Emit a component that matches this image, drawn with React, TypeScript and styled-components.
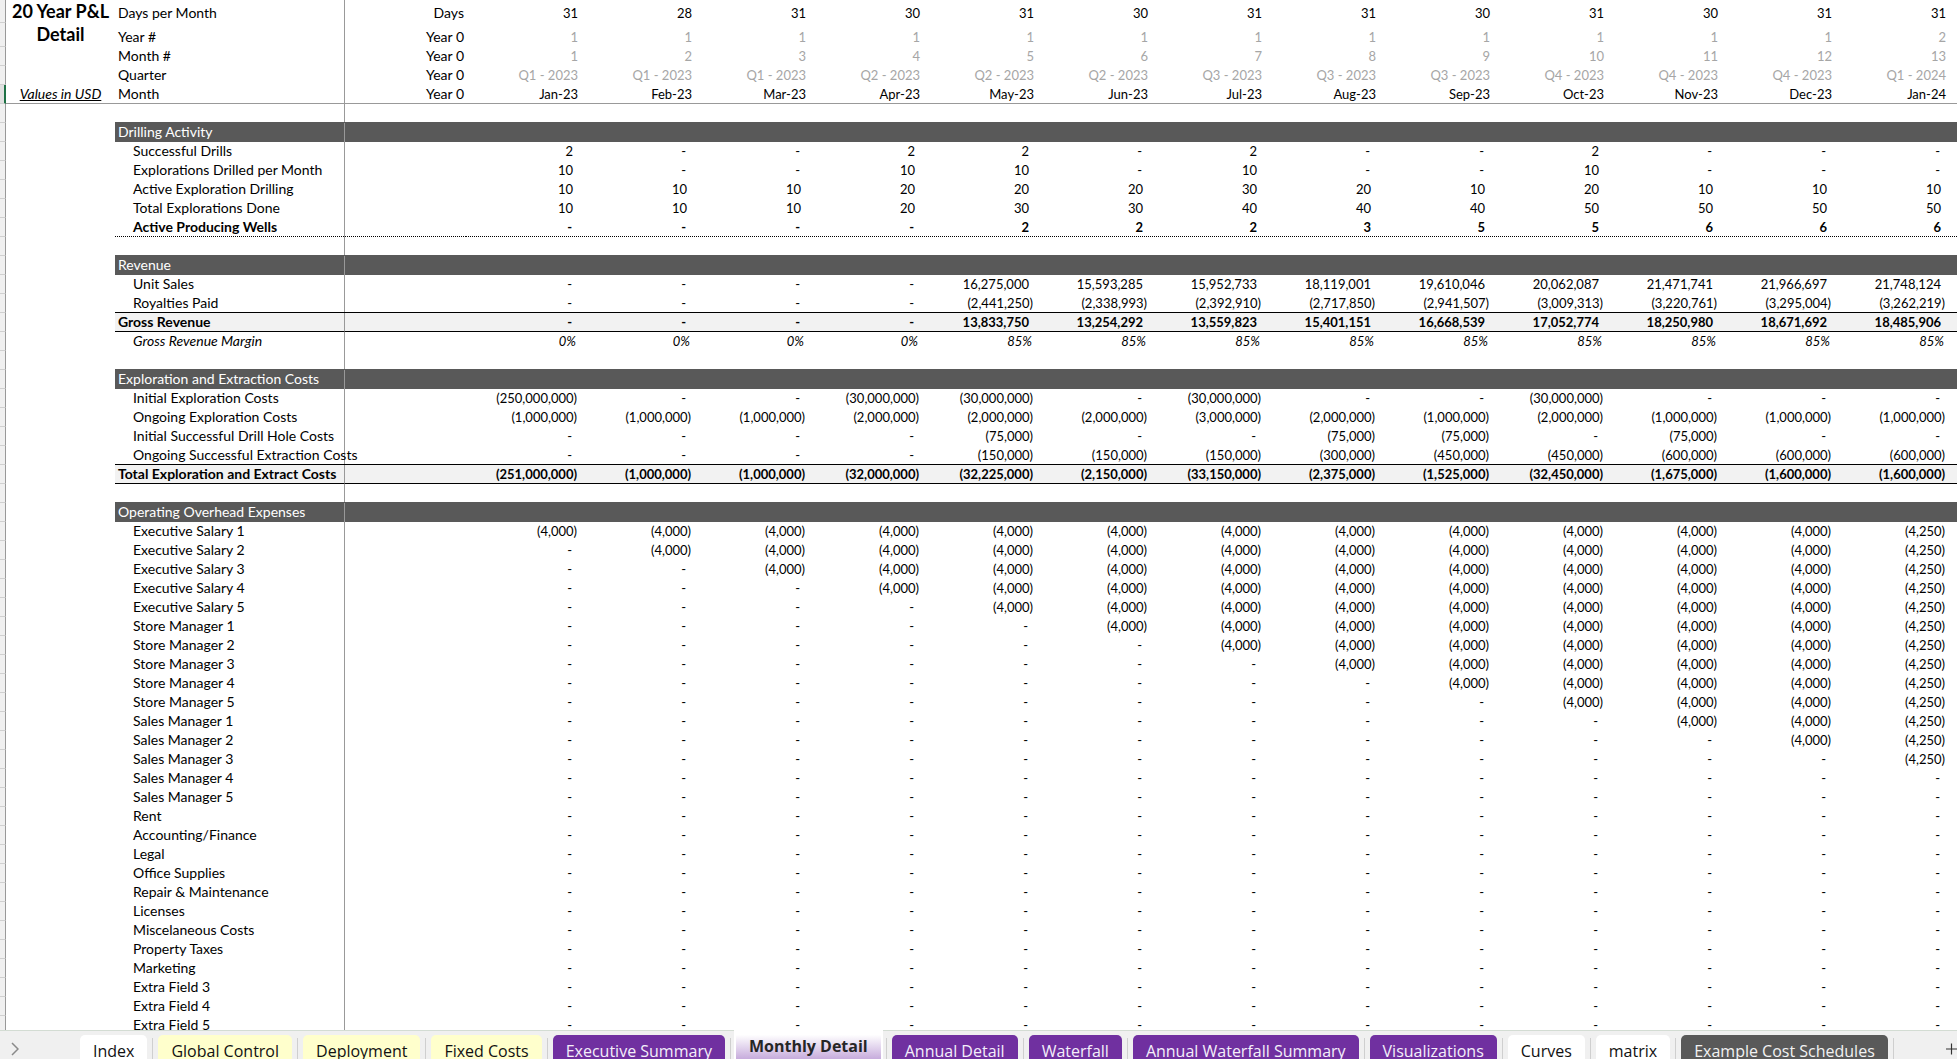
import React from 'react';
import styled, { createGlobalStyle, css } from 'styled-components';

const GlobalStyle = createGlobalStyle`
  *, *::before, *::after { box-sizing: border-box; }
  body {
    margin: 0;
    background: #ffffff;
    color: #000000;
    font-family: Lato, "Liberation Sans", sans-serif;
  }
`;

const GREY = '#595959';
const RULE = '#999999';

type Kind = 'head' | 'section' | 'line' | 'dotted' | 'total' | 'margin' | 'blank';

const Workbook = styled.div`
  display: flex;
  flex-direction: column;
  height: 100vh;
  overflow: hidden;
`;

const SheetArea = styled.main`
  flex: 1;
  min-height: 0;
  overflow: hidden;
`;

const Sheet = styled.table`
  width: 100%;
  table-layout: fixed;
  border-collapse: separate;
  border-spacing: 0;
  font-size: 13px;
  line-height: 18px;
`;

const Col = styled.col<{ $w?: number }>`
  ${p => p.$w && css`width: ${p.$w}px;`}
`;

const Row = styled.tr<{ $h?: number }>`
  height: ${p => p.$h ?? 19}px;
`;

const Gutter = styled.td<{ $active?: boolean }>`
  padding: 0;
  background: ${p => (p.$active ? '#e0e0e0' : '#f0f0f0')};
  border-right: ${p => (p.$active ? '2px solid #1e7145' : `1px solid ${RULE}`)};
  border-bottom: 1px solid #d0d0d0;
`;

const band = css<{ $kind: Kind; $rule?: boolean }>`
  padding-bottom: ${p => (p.$kind === 'total' || p.$rule ? 0 : 1)}px;
  ${p => p.$kind === 'section' && css`
    background: ${GREY};
    color: #ffffff;
    box-shadow: 0 -1px 0 ${GREY};
  `}
  ${p => p.$kind === 'total' && css`
    background: #f2f2f2;
    font-weight: 700;
    border-bottom: 1px solid #000000;
    box-shadow: 0 -1px 0 #000000;
  `}
  ${p => p.$kind === 'dotted' && css`
    font-weight: 700;
    background: repeating-linear-gradient(90deg, #000000 0 1px, transparent 1px 2px) bottom / 100% 1px no-repeat;
  `}
  ${p => p.$kind === 'margin' && css`font-style: italic;`}
  ${p => p.$rule && css`border-bottom: 1px solid ${RULE};`}
`;

const Side = styled.td<{ $rule?: boolean }>`
  padding: 0;
  text-align: center;
  vertical-align: bottom;
  font-style: italic;
  text-decoration: underline;
  font-size: 14px;
  ${p => p.$rule && css`border-bottom: 1px solid ${RULE};`}
`;

const Title = styled.th`
  padding: 0;
  vertical-align: top;
  font-size: 18px;
  line-height: 23px;
  font-weight: 700;
`;

const Label = styled.th<{ $kind: Kind; $rule?: boolean }>`
  padding: 0 0 0 ${p => (['line', 'dotted', 'margin'].includes(p.$kind) ? 18 : 3)}px;
  border-right: 1px solid ${RULE};
  text-align: left;
  vertical-align: bottom;
  font-weight: 400;
  font-size: 14px;
  white-space: nowrap;
  ${band}
`;

const Cell = styled.td<{ $kind: Kind; $inset?: number; $muted?: boolean; $rule?: boolean; $unit?: boolean }>`
  padding: 0 ${p => p.$inset ?? 2}px 0 0;
  text-align: right;
  vertical-align: bottom;
  white-space: nowrap;
  ${band}
  ${p => p.$muted && css`color: #a6a6a6;`}
  ${p => p.$unit && css`font-size: 14px;`}
`;

const MONTHS = 13;
const fill = (v: string) => Array<string>(MONTHS).fill(v);
const list = (s: string) => s.split(' ');

interface RowData { kind: Kind; label?: string; values?: string[] }

const section = (label: string): RowData => ({ kind: 'section', label });
const line = (label: string, values: string): RowData => ({ kind: 'line', label, values: list(values) });
const blank: RowData = { kind: 'blank' };

// Each hire starts one month after the previous one; salaries step up in the second year.
const staff = ['Executive Salary', 'Store Manager', 'Sales Manager'].flatMap((role, r) =>
  [1, 2, 3, 4, 5].map((n): RowData => {
    const start = r * 5 + n - 1;
    return {
      kind: 'line',
      label: `${role} ${n}`,
      values: fill('-').map((_, m) => (m < start ? '-' : m === 12 ? '(4,250)' : '(4,000)')),
    };
  }),
);

const overheads = [
  'Rent', 'Accounting/Finance', 'Legal', 'Office Supplies', 'Repair & Maintenance', 'Licenses',
  'Miscelaneous Costs', 'Property Taxes', 'Marketing', 'Extra Field 3', 'Extra Field 4', 'Extra Field 5',
].map((label): RowData => ({ kind: 'line', label, values: fill('-') }));

const ROWS: RowData[] = [
  blank,
  section('Drilling Activity'),
  line('Successful Drills', '2 - - 2 2 - 2 - - 2 - - -'),
  line('Explorations Drilled per Month', '10 - - 10 10 - 10 - - 10 - - -'),
  line('Active Exploration Drilling', '10 10 10 20 20 20 30 20 10 20 10 10 10'),
  line('Total Explorations Done', '10 10 10 20 30 30 40 40 40 50 50 50 50'),
  { kind: 'dotted', label: 'Active Producing Wells', values: list('- - - - 2 2 2 3 5 5 6 6 6') },
  blank,
  section('Revenue'),
  line('Unit Sales', '- - - - 16,275,000 15,593,285 15,952,733 18,119,001 19,610,046 20,062,087 21,471,741 21,966,697 21,748,124'),
  line('Royalties Paid', '- - - - (2,441,250) (2,338,993) (2,392,910) (2,717,850) (2,941,507) (3,009,313) (3,220,761) (3,295,004) (3,262,219)'),
  { kind: 'total', label: 'Gross Revenue', values: list('- - - - 13,833,750 13,254,292 13,559,823 15,401,151 16,668,539 17,052,774 18,250,980 18,671,692 18,485,906') },
  { kind: 'margin', label: 'Gross Revenue Margin', values: list('0% 0% 0% 0% 85% 85% 85% 85% 85% 85% 85% 85% 85%') },
  blank,
  section('Exploration and Extraction Costs'),
  line('Initial Exploration Costs', '(250,000,000) - - (30,000,000) (30,000,000) - (30,000,000) - - (30,000,000) - - -'),
  line('Ongoing Exploration Costs', '(1,000,000) (1,000,000) (1,000,000) (2,000,000) (2,000,000) (2,000,000) (3,000,000) (2,000,000) (1,000,000) (2,000,000) (1,000,000) (1,000,000) (1,000,000)'),
  line('Initial Successful Drill Hole Costs', '- - - - (75,000) - - (75,000) (75,000) - (75,000) - -'),
  line('Ongoing Successful Extraction Costs', '- - - - (150,000) (150,000) (150,000) (300,000) (450,000) (450,000) (600,000) (600,000) (600,000)'),
  { kind: 'total', label: 'Total Exploration and Extract Costs', values: list('(251,000,000) (1,000,000) (1,000,000) (32,000,000) (32,225,000) (2,150,000) (33,150,000) (2,375,000) (1,525,000) (32,450,000) (1,675,000) (1,600,000) (1,600,000)') },
  blank,
  section('Operating Overhead Expenses'),
  ...staff,
  ...overheads,
];

const NAMES = list('Jan-23 Feb-23 Mar-23 Apr-23 May-23 Jun-23 Jul-23 Aug-23 Sep-23 Oct-23 Nov-23 Dec-23 Jan-24');

const HEAD = [
  { label: 'Days per Month', unit: 'Days', h: 23, values: list('31 28 31 30 31 30 31 31 30 31 30 31 31') },
  { label: 'Year #', unit: 'Year 0', h: 24, muted: true, values: NAMES.map((_, i) => (i < 12 ? '1' : '2')) },
  { label: 'Month #', unit: 'Year 0', h: 19, muted: true, values: NAMES.map((_, i) => `${i + 1}`) },
  { label: 'Quarter', unit: 'Year 0', h: 19, muted: true, values: NAMES.map((_, i) => (i < 12 ? `Q${Math.floor(i / 3) + 1} - 2023` : 'Q1 - 2024')) },
  { label: 'Month', unit: 'Year 0', h: 19, values: NAMES },
];

// Accounting formats keep room for a closing parenthesis after positive numbers and dashes.
const insetOf = (v: string) => (v === '-' ? 8 : v.endsWith(')') ? 3 : v.endsWith('%') ? 4 : 7);

type Tone = 'white' | 'yellow' | 'purple' | 'grey' | 'active';

const TONES: Record<Tone, { bg: string; fg: string }> = {
  white: { bg: '#ffffff', fg: '#111111' },
  yellow: { bg: '#ffffcc', fg: '#111111' },
  purple: { bg: '#7030a0', fg: '#f4eefa' },
  grey: { bg: '#595959', fg: '#f2f2f2' },
  active: { bg: 'linear-gradient(#ffffff 15%, #c0a2d8)', fg: '#262626' },
};

const TABS: [string, Tone][] = [
  ['Index', 'white'],
  ['Global Control', 'yellow'],
  ['Deployment', 'yellow'],
  ['Fixed Costs', 'yellow'],
  ['Executive Summary', 'purple'],
  ['Monthly Detail', 'active'],
  ['Annual Detail', 'purple'],
  ['Waterfall', 'purple'],
  ['Annual Waterfall Summary', 'purple'],
  ['Visualizations', 'purple'],
  ['Curves', 'white'],
  ['matrix', 'white'],
  ['Example Cost Schedules', 'grey'],
];

const TabBar = styled.nav`
  display: flex;
  flex: none;
  height: 29px;
  overflow: hidden;
  background: linear-gradient(#d3dcd3 0 1px, #f0f0f0 1px);
`;

const IconButton = styled.button<{ $w: number }>`
  flex: none;
  display: flex;
  align-items: center;
  justify-content: flex-start;
  width: ${p => p.$w}px;
  height: 38px;
  padding: 0 0 0 11px;
  border: 0;
  background: none;
  color: #8a8a8a;
`;

const Tabs = styled.div`
  display: flex;
  flex: 1;
  min-width: 0;
`;

const Slot = styled.div<{ $active: boolean }>`
  flex: none;
  position: relative;
  ${p => (p.$active
    ? css`
      margin: 0 4px 0 3px;
      padding: 0 2px;
      background: #ffffff;
    `
    : css`padding: 5px 6px 0 5px;`)}
  &::after {
    content: '';
    position: absolute;
    right: ${p => (p.$active ? -4 : 0)}px;
    top: 8px;
    width: 1px;
    height: 22px;
    background: #cfcfcf;
  }
`;

const Tab = styled.button<{ $tone: Tone }>`
  display: block;
  height: 32px;
  padding: 0 13px;
  border: 0;
  border-radius: 5px 5px 0 0;
  background: ${p => TONES[p.$tone].bg};
  color: ${p => TONES[p.$tone].fg};
  font: ${p => (p.$tone === 'active' ? 700 : 400)} 16px/32px "Open Sans", "Noto Sans", sans-serif;
  white-space: nowrap;
`;

export default function App() {
  return (
    <Workbook>
      <GlobalStyle />
      <SheetArea>
        <Sheet>
          <colgroup>
            <Col $w={6} />
            <Col $w={109} />
            <Col $w={230} />
            <Col $w={121} />
            {NAMES.map(n => <Col key={n} />)}
            <Col $w={9} />
          </colgroup>
          <thead>
            {HEAD.map((r, i) => {
              const last = i === HEAD.length - 1;
              return (
                <Row key={r.label} $h={r.h}>
                  <Gutter $active={last} />
                  {i === 0 && <Title rowSpan={2}>20 Year P&amp;L Detail</Title>}
                  {i > 1 && <Side $rule={last}>{last ? 'Values in USD' : null}</Side>}
                  <Label scope="row" $kind="head" $rule={last}>{r.label}</Label>
                  <Cell $kind="head" $rule={last} $unit>{r.unit}</Cell>
                  {r.values.map((v, m) => (
                    <Cell key={m} $kind="head" $muted={r.muted} $rule={last}>{v}</Cell>
                  ))}
                  <Cell $kind="head" $rule={last} />
                </Row>
              );
            })}
          </thead>
          <tbody>
            {ROWS.map((r, i) => (
              <Row key={i}>
                <Gutter />
                <Side />
                <Label scope="row" $kind={r.kind}>{r.label}</Label>
                <Cell $kind={r.kind} />
                {(r.values ?? fill('')).map((v, m) => (
                  <Cell key={m} $kind={r.kind} $inset={insetOf(v)}>{v}</Cell>
                ))}
                <Cell $kind={r.kind} />
              </Row>
            ))}
          </tbody>
        </Sheet>
      </SheetArea>
      <TabBar aria-label="Sheets">
        <IconButton $w={75} aria-label="Scroll sheets right">
          <svg width="8" height="14" viewBox="0 0 8 14" fill="none" stroke="currentColor" strokeWidth="1.5">
            <path d="M1 1l6 6-6 6" />
          </svg>
        </IconButton>
        <Tabs>
          {TABS.map(([name, tone]) => (
            <Slot key={name} $active={tone === 'active'}>
              <Tab $tone={tone}>{name}</Tab>
            </Slot>
          ))}
        </Tabs>
        <IconButton $w={22} aria-label="New sheet">
          <svg width="14" height="14" viewBox="0 0 14 14" fill="none" stroke="#333333" strokeWidth="1.5">
            <path d="M7 0v14M0 7h14" />
          </svg>
        </IconButton>
      </TabBar>
    </Workbook>
  );
}
